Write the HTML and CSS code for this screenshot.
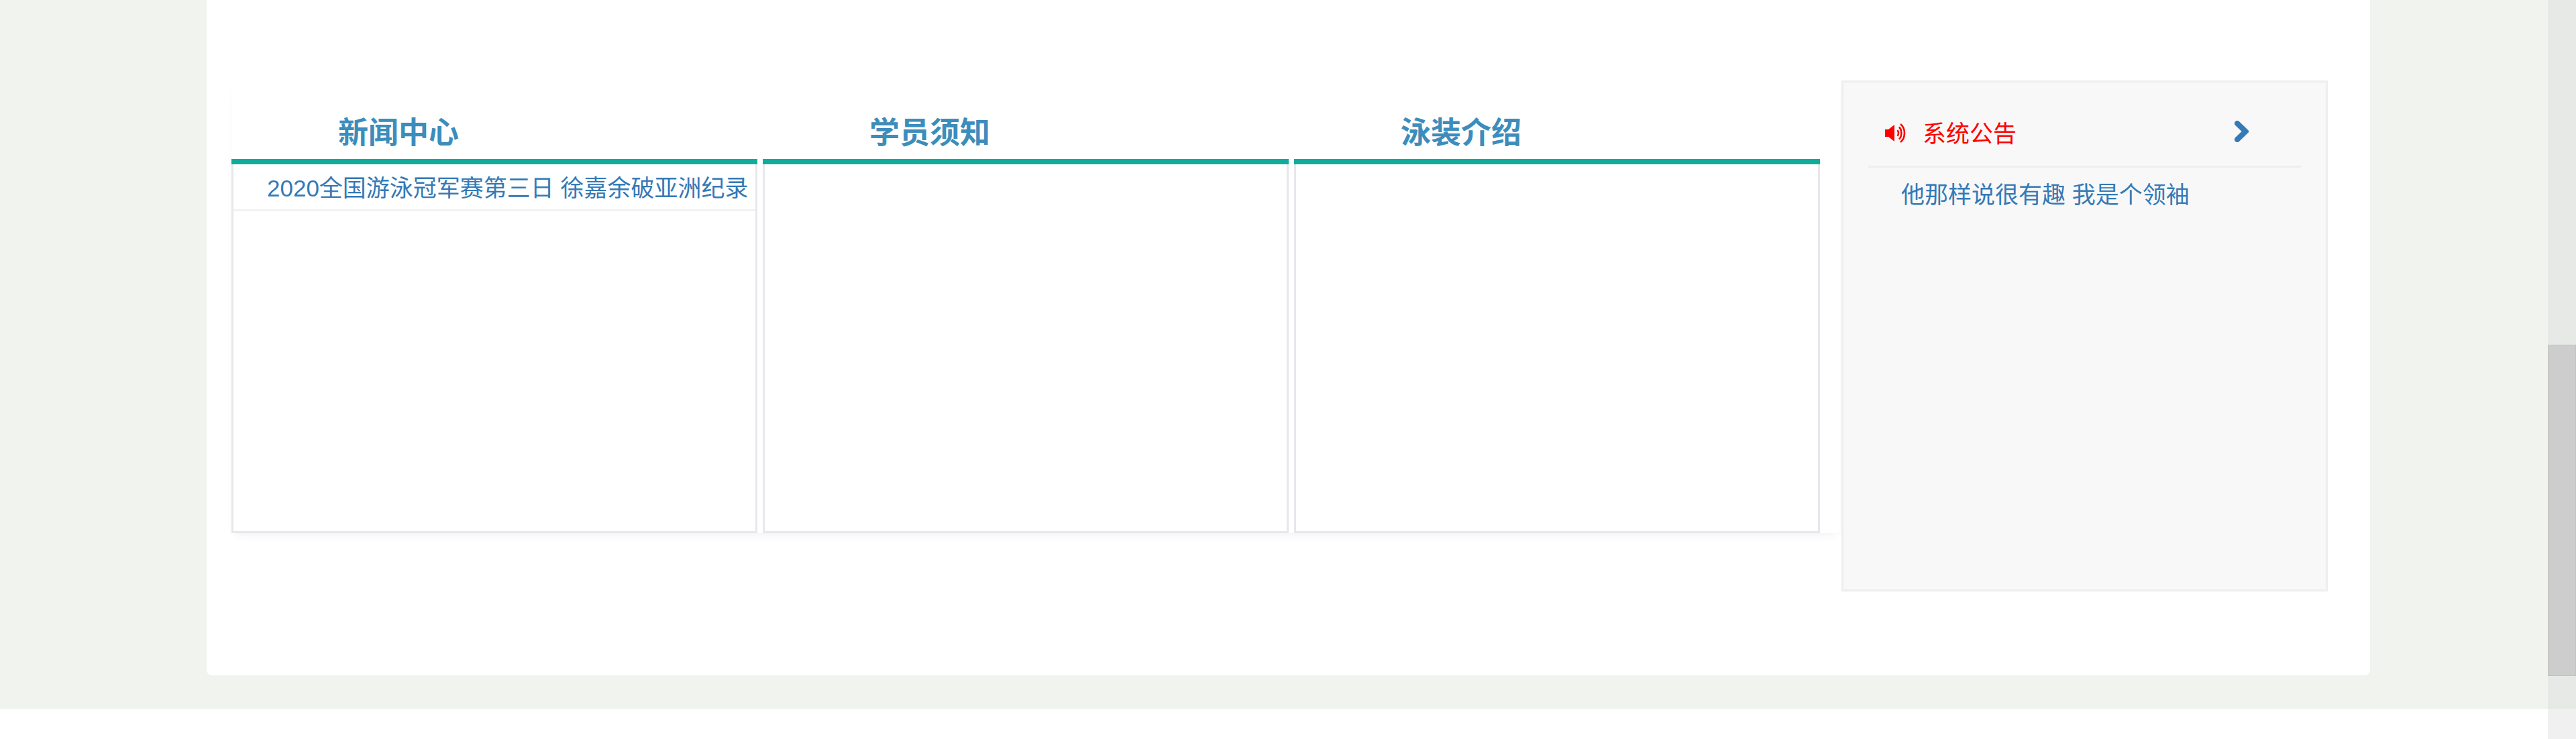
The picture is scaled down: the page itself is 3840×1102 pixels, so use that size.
FILE: index.html
```html
<!DOCTYPE html>
<html lang="zh-CN">
<head>
<meta charset="utf-8">
<title>系统公告</title>
<link rel="stylesheet" href="styles.css">
</head>
<body>
<div class="viewport">
  <div class="page">
    <main class="container">
      <section class="tabs">
        <article class="col">
          <h2 class="col-title">新闻中心</h2>
          <div class="col-bar"></div>
          <div class="col-body">
            <a class="news-row" href="#">2020全国游泳冠军赛第三日 徐嘉余破亚洲纪录</a>
          </div>
        </article>
        <article class="col">
          <h2 class="col-title">学员须知</h2>
          <div class="col-bar"></div>
          <div class="col-body"></div>
        </article>
        <article class="col">
          <h2 class="col-title">泳装介绍</h2>
          <div class="col-bar"></div>
          <div class="col-body"></div>
        </article>
      </section>
      <aside class="notice">
        <div class="notice-head">
          <svg class="icon-speaker" viewBox="0 0 33 29" aria-hidden="true">
            <path class="speaker-body" d="M0 9H5L14 2V27L5 20H0Z"/>
            <path class="speaker-wave" d="M18.5 10C20.5 12.5 20.5 16.5 18.5 19"/>
            <path class="speaker-wave" d="M21 5.5C25.5 10 25.5 19 21 23.5"/>
            <path class="speaker-wave" d="M23 1C31 7.5 31 21.5 23 28"/>
          </svg>
          <span class="notice-title">系统公告</span>
          <svg class="icon-chevron" viewBox="0 0 21 32" aria-hidden="true">
            <path d="M4 4L16.5 16L4 28"/>
          </svg>
        </div>
        <a class="notice-link" href="#">他那样说很有趣 我是个领袖</a>
      </aside>
    </main>
  </div>
  <div class="scrollbar"><div class="thumb"></div></div>
</div>
</body>
</html>
```
FILE: styles.css
```css
* { box-sizing: border-box; }
html, body { margin: 0; padding: 0; background: #fff; overflow: hidden; }
body { font-family: "Liberation Sans", "Noto Sans CJK SC", sans-serif; font-size: 35px; }
a { color: #337ab7; text-decoration: none; }

.viewport { display: flex; height: 1102px; }
.page { flex: 1; height: 1057px; background: #f1f3ef; padding-left: 308px; }
.container {
  display: flex; align-items: flex-start;
  width: 3225px; height: 1007px; padding: 120px 0 0 37px;
  background: #fff; border-radius: 0 0 8px 8px;
}
.tabs {
  display: flex; gap: 8px; width: 2398px; height: 675px; margin-right: 2px;
  background: #fff; border-radius: 0 0 8px 8px;
  box-shadow: 0 8px 14px -6px rgba(30, 50, 70, .07), 0 0 2px rgba(0, 0, 0, .02);
}
.col { display: flex; flex-direction: column; width: 784px; }
.col-title {
  height: 117px; margin: 0; padding: 49px 0 0 159px;
  font-size: 45px; line-height: 60px; font-weight: 700; color: #3c8dbc;
}
.col-bar { height: 8px; background: #0fac9c; }
.col-body {
  flex: 1;
  border: 3px solid #e7e7ec; border-top: 0;
}
.news-row {
  display: block; height: 70px; padding: 11px 0 0 50px;
  font-size: 35px; line-height: 50px; white-space: nowrap;
  border-bottom: 3px solid #f2f2f3;
}

.notice {
  width: 725px; height: 762px; padding: 0 37px;
  background: #f8f8f8; border: 3px solid #eee;
}
.notice-head {
  display: flex; align-items: center; height: 127px; padding-top: 26px;
  border-bottom: 3px solid #eee;
}
.icon-speaker { width: 33px; height: 29px; margin-left: 25px; flex: none; }
.speaker-body { fill: #f00; }
.speaker-wave { fill: none; stroke: #f00; stroke-width: 2.6; }
.notice-title { margin: 3px 0 0 23px; color: #f00; font-size: 35px; line-height: 50px; width: 465px; flex: none; }
.icon-chevron { width: 21px; height: 32px; flex: none; margin-top: -5px; }
.icon-chevron path { fill: none; stroke: #337ab7; stroke-width: 8; stroke-linejoin: miter; stroke-linecap: round; }
.notice-link { display: block; padding: 16px 0 0 49px; line-height: 50px; white-space: nowrap; }

.scrollbar { width: 42px; height: 1102px; background: linear-gradient(#e7e9e6 1057px, #f0f0f0 1057px); padding-top: 514px; }
.thumb { height: 494px; background: #cdcdcd; border: 1px solid #c2c2c2; }
```
